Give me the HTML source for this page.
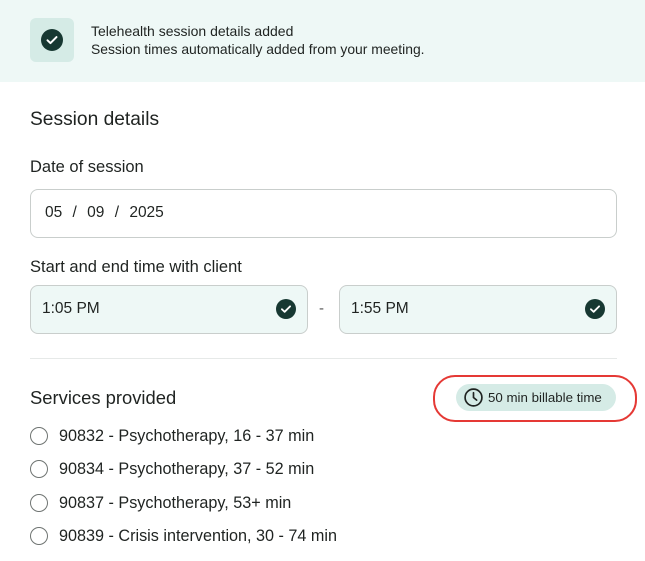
<!DOCTYPE html><html><head><style>
*{margin:0;padding:0;box-sizing:border-box}
body{width:645px;height:561px;background:#fff;font-family:"Liberation Sans",sans-serif;color:#1f2321;position:relative;overflow:hidden}
.a{position:absolute}
.banner{left:0;top:0;width:645px;height:82px;background:#eef8f6}
.ib{left:30px;top:18px;width:44px;height:44px;background:#d5ebe6;border-radius:6px}
.inp{border:1px solid #c9cecc;border-radius:8px;height:49px}
.rad{width:18px;height:18px;border:1.5px solid #6f7472;border-radius:50%;left:30px}
.rt{left:59px;font-size:16.2px}
</style></head><body>
<div class="a banner"></div>
<div class="a ib"><svg class="a" style="left:11px;top:11px" width="22" height="22" viewBox="0 0 22 22"><circle cx="11" cy="11" r="11" fill="#173832"/><path d="M6.5 11.3l3 2.8 6-6" stroke="#fff" stroke-width="2" fill="none" stroke-linecap="round" stroke-linejoin="round"/></svg></div>
<div class="a" style="left:91px;top:23px;font-size:14px">Telehealth session details added</div>
<div class="a" style="left:91px;top:41px;font-size:13.9px">Session times automatically added from your meeting.</div>
<div class="a" style="left:30px;top:109px;font-size:19.2px">Session details</div>
<div class="a" style="left:30px;top:158px;font-size:16.5px">Date of session</div>
<div class="a inp" style="left:30px;top:189px;width:587px"></div>
<div class="a" style="left:45px;top:204px;font-size:15.5px;word-spacing:6px">05 / 09 / 2025</div>
<div class="a" style="left:30px;top:258px;font-size:16.5px">Start and end time with client</div>
<div class="a inp" style="left:30px;top:285px;width:278px;background:#eef8f6"></div>
<div class="a inp" style="left:339px;top:285px;width:278px;background:#eef8f6"></div>
<div class="a" style="left:42px;top:300px;font-size:15.5px">1:05 PM</div>
<div class="a" style="left:351px;top:300px;font-size:15.5px">1:55 PM</div>
<div class="a" style="left:319px;top:300px;font-size:15px;color:#555">-</div>
<svg class="a" style="left:276px;top:299px" width="20" height="20" viewBox="0 0 22 22"><circle cx="11" cy="11" r="11" fill="#173832"/><path d="M6.5 11.3l3 2.8 6-6" stroke="#fff" stroke-width="2" fill="none" stroke-linecap="round" stroke-linejoin="round"/></svg>
<svg class="a" style="left:585px;top:299px" width="20" height="20" viewBox="0 0 22 22"><circle cx="11" cy="11" r="11" fill="#173832"/><path d="M6.5 11.3l3 2.8 6-6" stroke="#fff" stroke-width="2" fill="none" stroke-linecap="round" stroke-linejoin="round"/></svg>
<div class="a" style="left:30px;top:358px;width:587px;height:1px;background:#e6e9e8"></div>
<div class="a" style="left:30px;top:387px;font-size:18.4px">Services provided</div>
<div class="a" style="left:433px;top:375px;width:204px;height:47px;border:2px solid #e53935;border-radius:22px"></div>
<div class="a" style="left:456px;top:384px;width:160px;height:27px;background:#d5ebe6;border-radius:14px"></div>
<svg class="a" style="left:463px;top:387px" width="21" height="21" viewBox="0 0 20 20"><circle cx="10" cy="10" r="8" stroke="#1f2321" stroke-width="1.6" fill="none"/><path d="M10 5.5V10l3 2.5" stroke="#1f2321" stroke-width="1.6" fill="none" stroke-linecap="round"/></svg>
<div class="a" style="left:488px;top:390px;font-size:13.3px">50 min billable time</div>
<div class="a rad" style="top:427px"></div><div class="a rt" style="top:427px">90832 - Psychotherapy, 16 - 37 min</div>
<div class="a rad" style="top:460px"></div><div class="a rt" style="top:460px">90834 - Psychotherapy, 37 - 52 min</div>
<div class="a rad" style="top:494px"></div><div class="a rt" style="top:494px">90837 - Psychotherapy, 53+ min</div>
<div class="a rad" style="top:527px"></div><div class="a rt" style="top:527px">90839 - Crisis intervention, 30 - 74 min</div>
</body></html>
